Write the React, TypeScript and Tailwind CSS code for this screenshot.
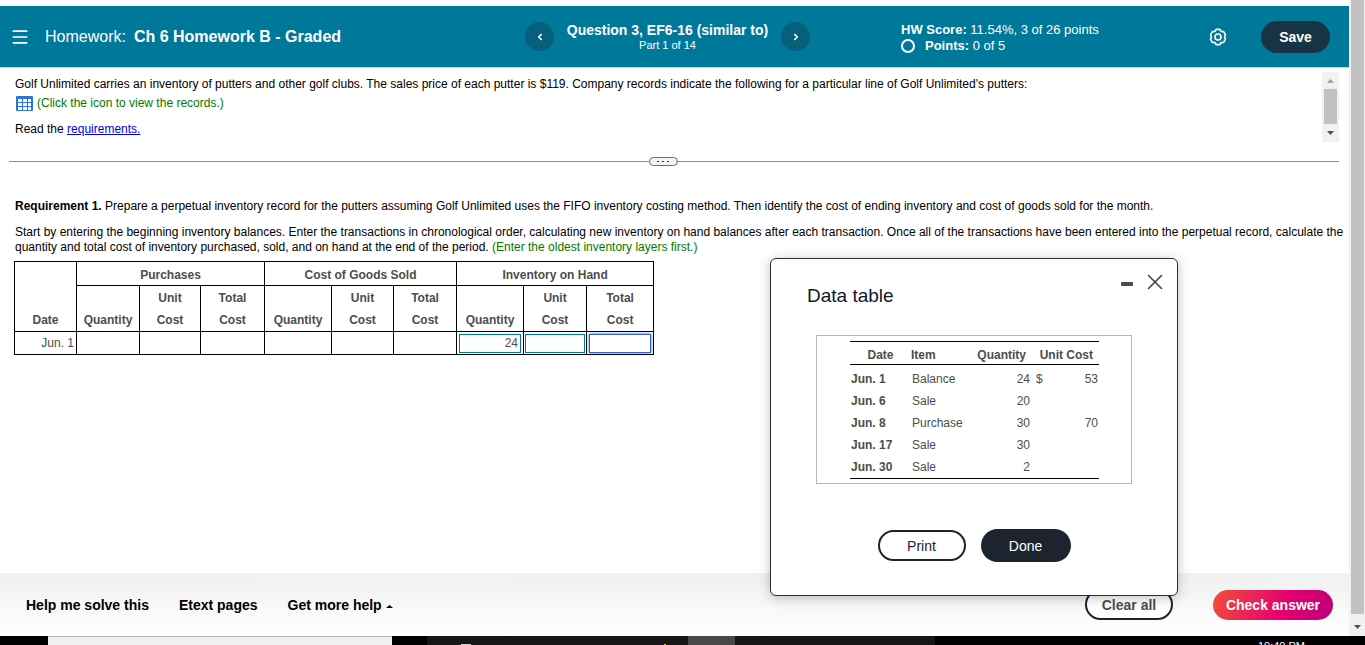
import { useState } from "react";
import { ChevronLeft, ChevronRight, Menu, X } from "lucide-react";

type RecordRow = {
  date: string;
  item: string;
  quantity: number;
  unitCost?: number;
};

const RECORDS: RecordRow[] = [
  { date: "Jun. 1", item: "Balance", quantity: 24, unitCost: 53 },
  { date: "Jun. 6", item: "Sale", quantity: 20 },
  { date: "Jun. 8", item: "Purchase", quantity: 30, unitCost: 70 },
  { date: "Jun. 17", item: "Sale", quantity: 30 },
  { date: "Jun. 30", item: "Sale", quantity: 2 },
];

const GROUPS = ["Purchases", "Cost of Goods Sold", "Inventory on Hand"];

const CELL = "border border-black";
const ANSWER_INPUT = "block h-[19px] w-full border bg-white px-0.5 text-right text-xs text-[#4d4d4d] outline-none";

function TableIcon() {
  return (
    <svg width="17" height="15" viewBox="0 0 17 15" aria-hidden="true">
      <rect width="17" height="15" rx="1" fill="#2b78d4" />
      <g fill="#fff">
        {[3, 7, 11].map((y) =>
          [2, 7, 12].map((x) => <rect key={`${x}-${y}`} x={x} y={y} width={x === 12 ? 3 : 4} height="3" />),
        )}
      </g>
    </svg>
  );
}

function GearIcon() {
  return (
    <svg
      width="18"
      height="18"
      viewBox="0 0 24 24"
      fill="none"
      stroke="currentColor"
      strokeWidth="2.2"
      strokeLinejoin="round"
      aria-hidden="true"
    >
      <path d="M9.5 1.9H14.5L16.3 4.6L19.5 4.8L22 9.1L20.6 12L22 14.9L19.5 19.2L16.3 19.4L14.5 22.1H9.5L7.7 19.4L4.5 19.2L2 14.9L3.4 12L2 9.1L4.5 4.8L7.7 4.6Z" />
      <circle cx="12" cy="12" r="4" />
    </svg>
  );
}

function ScrollArrow({ up = false, className = "fill-[#505050]" }: { up?: boolean; className?: string }) {
  return (
    <svg width="7" height="4" viewBox="0 0 7 4" className={className} aria-hidden="true">
      <path d={up ? "M0 4L3.5 0L7 4Z" : "M0 0H7L3.5 4Z"} />
    </svg>
  );
}

function Header() {
  return (
    <header className="mt-1.5 flex h-[62px] shrink-0 items-center border-b border-[#b5d3de] bg-[#007899] pr-[19px] pl-2.5 text-white">
      <div className="flex flex-1 items-center">
        <button type="button" aria-label="Menu">
          <Menu className="h-5 w-5" strokeWidth={2} />
        </button>
        <h1 className="ml-[15px] flex gap-2 text-base">
          Homework: <strong>Ch 6 Homework B - Graded</strong>
        </h1>
      </div>

      <div className="flex w-[285px] items-center justify-between">
        <button
          type="button"
          aria-label="Previous question"
          className="flex h-[29px] w-[29px] items-center justify-center rounded-full bg-[#06607c]"
        >
          <ChevronLeft className="h-2.5 w-2.5" strokeWidth={4} />
        </button>
        <div className="text-center">
          <p className="text-sm leading-4 font-bold">Question 3, EF6-16 (similar to)</p>
          <p className="text-[11px] leading-[14px]">Part 1 of 14</p>
        </div>
        <button
          type="button"
          aria-label="Next question"
          className="flex h-[29px] w-[29px] items-center justify-center rounded-full bg-[#06607c]"
        >
          <ChevronRight className="h-2.5 w-2.5" strokeWidth={4} />
        </button>
      </div>

      <div className="ml-[91px] w-[308px] pt-0.5 text-[13px] leading-4">
        <p>
          <strong>HW Score:</strong> 11.54%, 3 of 26 points
        </p>
        <p className="flex items-center">
          <span className="mr-2.5 h-3.5 w-3.5 rounded-full border-2 border-white" />
          <span>
            <strong>Points:</strong> 0 of 5
          </span>
        </p>
      </div>

      <button type="button" aria-label="Settings">
        <GearIcon />
      </button>
      <button type="button" className="ml-[34px] h-8 w-[69px] rounded-full bg-[#173445] text-sm font-bold">
        Save
      </button>
    </header>
  );
}

function QuestionIntro() {
  return (
    <section className="flex pt-1 pr-2.5 pl-[15px]">
      <div className="flex-1 pt-1">
        <p className="leading-4">
          Golf Unlimited carries an inventory of putters and other golf clubs. The sales price of each putter is $119.
          Company records indicate the following for a particular line of Golf Unlimited's putters:
        </p>
        <button type="button" className="mt-[3px] flex items-center gap-1 pl-px leading-4 text-[#007a00]">
          <TableIcon />
          (Click the icon to view the records.)
        </button>
        <p className="mt-2.5 leading-4">
          Read the{" "}
          <a href="#requirements" className="text-[#0000ee] underline">
            requirements.
          </a>
        </p>
      </div>
      <div className="flex h-[70px] w-[17px] flex-col items-center bg-[#f1f1f1]">
        <div className="flex h-[17px] items-center">
          <ScrollArrow up className="fill-[#a3a3a3]" />
        </div>
        <div className="h-[35px] w-[13px] bg-[#c1c1c1]" />
        <div className="flex flex-1 items-center">
          <ScrollArrow />
        </div>
      </div>
    </section>
  );
}

function Divider() {
  return (
    <div className="mt-[15px] flex items-center pr-2.5 pl-[9px]">
      <div className="h-px flex-1 bg-[#868ba3]" />
      <button
        type="button"
        aria-label="Resize panels"
        className="-mr-0.5 -ml-6 flex h-[9px] w-[29px] items-center justify-center gap-[3px] rounded-full border border-[#5f6f82] bg-[#f3f5f7]"
      >
        <span className="h-px w-0.5 bg-[#333]" />
        <span className="h-px w-0.5 bg-[#333]" />
        <span className="h-px w-0.5 bg-[#333]" />
      </button>
      <div className="h-px flex-1 bg-[#868ba3]" />
    </div>
  );
}

function InventoryRecord() {
  const [onHand, setOnHand] = useState({ quantity: "24", unitCost: "", totalCost: "" });

  return (
    <table className="mt-1.5 ml-[-1px] w-[640px] table-fixed border-collapse text-[#4d4d4d]">
      <colgroup>
        <col className="w-[62px]" />
        <col className="w-[63px]" />
        <col className="w-[61px]" />
        <col className="w-[64px]" />
        <col className="w-[67px]" />
        <col className="w-[62px]" />
        <col className="w-[63px]" />
        <col className="w-[67px]" />
        <col className="w-[63px]" />
        <col className="w-[67px]" />
      </colgroup>
      <thead>
        <tr className="h-6">
          <th rowSpan={2} className={`${CELL} align-bottom leading-[22px]`}>
            Date
          </th>
          {GROUPS.map((group) => (
            <th key={group} colSpan={3} className={`${CELL} pt-0.5 leading-5`}>
              {group}
            </th>
          ))}
        </tr>
        <tr className="h-[46px]">
          {GROUPS.map((group) =>
            ["Quantity", "Unit Cost", "Total Cost"].map((label) => (
              <th key={`${group}-${label}`} className={`${CELL} px-3 align-bottom leading-[22px] [&:nth-child(3n+1)]:px-0`}>
                {label}
              </th>
            )),
          )}
        </tr>
      </thead>
      <tbody>
        <tr className="h-[23px]">
          <th scope="row" className={`${CELL} pr-0.5 text-right font-normal leading-[22px]`}>
            Jun. 1
          </th>
          <td className={CELL} />
          <td className={CELL} />
          <td className={CELL} />
          <td className={CELL} />
          <td className={CELL} />
          <td className={CELL} />
          <td className={`${CELL} px-0.5`}>
            <input
              aria-label="Inventory on hand quantity, Jun. 1"
              value={onHand.quantity}
              onChange={(e) => setOnHand({ ...onHand, quantity: e.target.value })}
              className={`${ANSWER_INPUT} border-[#007899]`}
            />
          </td>
          <td className={`${CELL} px-px`}>
            <input
              aria-label="Inventory on hand unit cost, Jun. 1"
              value={onHand.unitCost}
              onChange={(e) => setOnHand({ ...onHand, unitCost: e.target.value })}
              className={`${ANSWER_INPUT} border-[#007899]`}
            />
          </td>
          <td className={`${CELL} px-0.5`}>
            <input
              aria-label="Inventory on hand total cost, Jun. 1"
              value={onHand.totalCost}
              onChange={(e) => setOnHand({ ...onHand, totalCost: e.target.value })}
              className={`${ANSWER_INPUT} border-[#2f62cf] shadow-[0_0_3px_#2f62cf]`}
            />
          </td>
        </tr>
      </tbody>
    </table>
  );
}

function DataTableDialog() {
  return (
    <div
      role="dialog"
      aria-labelledby="data-table-title"
      className="absolute top-[258px] right-[187px] h-[338px] w-[408px] rounded-md border border-[#2b2d33] bg-white shadow-[0_2px_12px_rgba(0,0,0,0.25)]"
    >
      <div className="flex justify-between pt-[15px] pr-[9px] pl-9">
        <h2 id="data-table-title" className="pt-2 text-[19px] leading-7 text-[#0f1729]">
          Data table
        </h2>
        <div className="flex h-4 items-center gap-[9px]">
          <button type="button" aria-label="Minimize" className="pt-1">
            <span className="block h-1 w-3 rounded-[1px] bg-[#4d4d4d]" />
          </button>
          <button type="button" aria-label="Close">
            <X className="h-[26px] w-[26px] text-[#3c4654]" strokeWidth={1.5} />
          </button>
        </div>
      </div>

      <div className="mx-[45px] mt-[25px] h-[149px] border border-[#b5b5b5] pt-[5px] pr-8 pl-[33px]">
        <table className="w-full table-fixed border-y border-black text-left text-[#4d4d4d]">
          <colgroup>
            <col className="w-[61px]" />
            <col className="w-[57px]" />
            <col className="w-[62px]" />
            <col className="w-[20px]" />
            <col />
          </colgroup>
          <thead>
            <tr className="h-[23px] border-b border-black [&>th]:pt-1">
              <th className="text-center">Date</th>
              <th>Item</th>
              <th className="pr-1 text-right">Quantity</th>
              <th colSpan={2} className="pr-1.5 text-right">
                Unit Cost
              </th>
            </tr>
          </thead>
          <tbody className="leading-[22px] [&>tr:first-child>*]:pt-[3px]">
            {RECORDS.map((row) => (
              <tr key={row.date}>
                <th scope="row" className="pl-px">
                  {row.date}
                </th>
                <td className="pl-px">{row.item}</td>
                <td className="text-right">{row.quantity}</td>
                <td className="pl-1.5">{row.item === "Balance" && "$"}</td>
                <td className="pr-px text-right">{row.unitCost}</td>
              </tr>
            ))}
          </tbody>
        </table>
      </div>

      <div className="mt-[45px] flex items-center justify-center gap-[15px] text-sm">
        <button type="button" className="h-[31px] w-[88px] rounded-full border-2 border-[#1d232f] text-[#1d232f]">
          Print
        </button>
        <button type="button" className="h-[33px] w-[90px] rounded-full bg-[#1d232f] text-white">
          Done
        </button>
      </div>
    </div>
  );
}

function Footer() {
  return (
    <footer className="flex h-[63px] shrink-0 items-center bg-linear-to-b from-[#f0f0f0] to-white pr-4 pl-[26px] text-sm font-bold text-black">
      <nav className="flex flex-1 gap-[30px]">
        <button type="button">Help me solve this</button>
        <button type="button">Etext pages</button>
        <button type="button" className="flex items-center gap-1">
          Get more help
          <svg width="7" height="3" viewBox="0 0 7 3" className="mt-1" aria-hidden="true">
            <path d="M0 3L3.5 0L7 3Z" />
          </svg>
        </button>
      </nav>
      <button type="button" className="h-[31px] w-[88px] rounded-full border-2 border-[#1d232f] bg-white text-[#4d4d4d]">
        Clear all
      </button>
      <button
        type="button"
        className="ml-10 h-[30px] w-[120px] rounded-full bg-linear-[110deg] from-[#f0503a] via-[#e4006e] via-60% to-[#b9007a] text-white"
      >
        Check answer
      </button>
    </footer>
  );
}

function PageScrollbar() {
  return (
    <div className="flex w-4 shrink-0 flex-col items-center bg-[#f1f1f1]">
      <div className="w-[13px] flex-1 bg-[#c1c1c1]" />
      <div className="flex h-[22px] items-center pt-1">
        <ScrollArrow />
      </div>
    </div>
  );
}

// only the top edge of the desktop taskbar shows below the page
function Taskbar() {
  return (
    <div className="flex h-[9px] shrink-0 overflow-hidden bg-black">
      <div className="ml-12 w-[344px] border-t border-[#b5b5b5] bg-[#f0f0f0]" />
      <div className="ml-[35px] flex w-[508px] bg-[#161616]">
        <div className="mt-2 ml-[34px] h-px w-2.5 bg-[#d0d0d0]" />
        <div className="mt-2 ml-[193px] h-px w-0.5 bg-[#d6c820]" />
        <div className="ml-[22px] w-[47px] bg-[#484848]" />
      </div>
      <div className="flex-1" />
      <span className="mr-[60px] pt-0.5 text-[11px] leading-4 text-white">10:40 PM</span>
    </div>
  );
}

export default function App() {
  return (
    <div className="relative flex h-screen flex-col overflow-hidden bg-white font-['Liberation_Sans',Arial,sans-serif] text-xs text-black">
      <div className="flex min-h-0 flex-1">
        <div className="flex min-w-0 flex-1 flex-col">
          <Header />
          <main className="min-h-0 flex-1 overflow-hidden">
            <QuestionIntro />
            <Divider />
            <section className="pt-[33px] pr-1 pl-[15px] leading-[15px]">
              <p>
                <strong>Requirement 1.</strong> Prepare a perpetual inventory record for the putters assuming Golf
                Unlimited uses the FIFO inventory costing method. Then identify the cost of ending inventory and cost of
                goods sold for the month.
              </p>
              <p className="mt-[11px]">
                Start by entering the beginning inventory balances. Enter the transactions in chronological order,
                calculating new inventory on hand balances after each transaction. Once all of the transactions have been
                entered into the perpetual record, calculate the quantity and total cost of inventory purchased, sold,
                and on hand at the end of the period.{" "}
                <span className="text-[#007a00]">(Enter the oldest inventory layers first.)</span>
              </p>
              <InventoryRecord />
            </section>
          </main>
          <Footer />
        </div>
        <PageScrollbar />
      </div>
      <Taskbar />
      <DataTableDialog />
    </div>
  );
}
